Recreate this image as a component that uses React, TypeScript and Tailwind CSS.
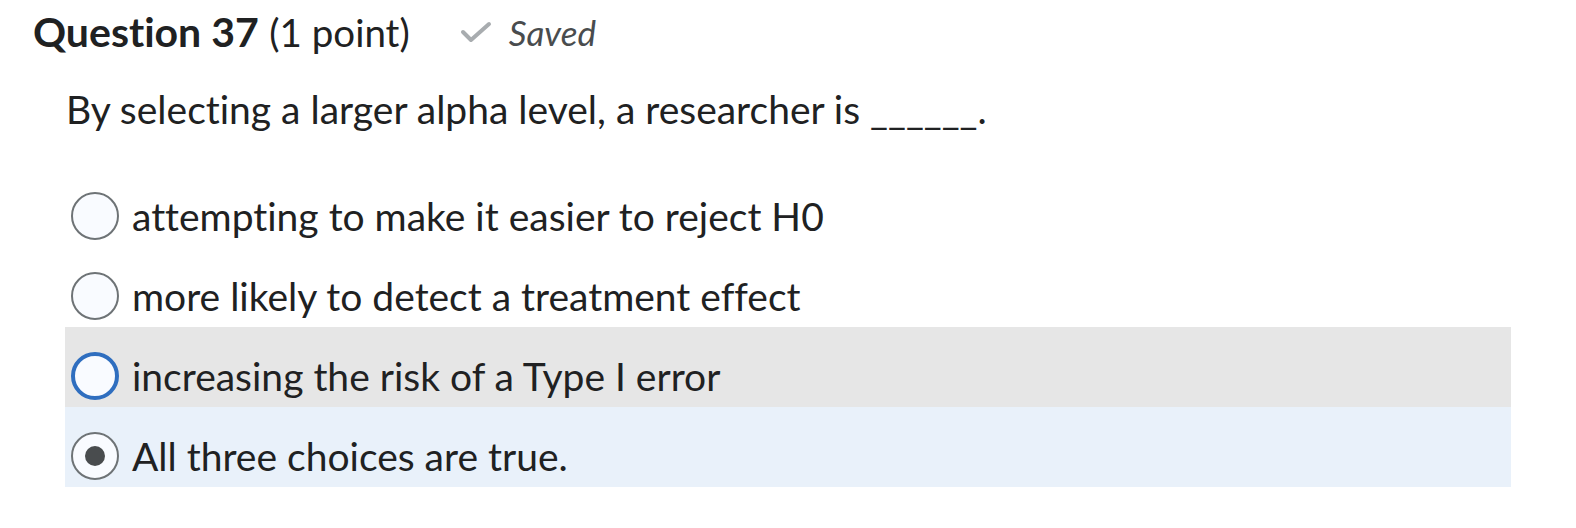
const choices = [
  { label: 'attempting to make it easier to reject H0', state: 'idle' },
  { label: 'more likely to detect a treatment effect', state: 'idle' },
  { label: 'increasing the risk of a Type I error', state: 'focus' },
  { label: 'All three choices are true.', state: 'checked' },
] as const

function Radio({ state }: { state: 'idle' | 'focus' | 'checked' }) {
  if (state === 'focus') {
    return <div className="w-12 h-12 shrink-0 rounded-full border-4 border-[#2f6ebf] bg-[#f9fbff]" />
  }
  return (
    <div className="w-12 h-12 shrink-0 rounded-full border-2 border-[#6e7376] bg-[#f9fbff] flex items-center justify-center">
      {state === 'checked' && <div className="w-5 h-5 rounded-full bg-[#494c4e]" />}
    </div>
  )
}

export default function App() {
  return (
    <div className="w-[1576px] h-[528px] bg-white text-[#202122] font-['Lato',sans-serif] [font-variant-ligatures:none] overflow-hidden">
      <div className="pl-[33px] pt-[8px] flex items-center h-[56px]">
        <h2 className="text-[41px] leading-[48px]">
          <span className="font-bold">Question 37</span> <span className="text-[38.5px]">(1 point)</span>
        </h2>
        <div className="ml-[50px] flex items-center gap-[17px]">
          <svg width="32" height="22" viewBox="0 0 32 22" fill="none">
            <polyline points="3,11 11,19 29,3" stroke="#a8acaf" strokeWidth="4" strokeLinecap="round" strokeLinejoin="round" />
          </svg>
          <span className="italic text-[35px] leading-[40px] text-[#494c4e]">Saved</span>
        </div>
      </div>

      <p className="ml-[66px] mt-[30px] text-[39px] leading-[46px]">
        By selecting a larger alpha level, a researcher is ______.
      </p>

      <div className="ml-[65px] mt-[35px] w-[1446px]">
        {choices.map((c) => (
          <div
            key={c.label}
            className={`h-[80px] pt-[25px] pl-[6px] flex items-start gap-[13px] ${
              c.state === 'focus' ? 'bg-[#e6e6e6]' : c.state === 'checked' ? 'bg-[#e9f1fa]' : ''
            }`}
          >
            <Radio state={c.state} />
            <span className="text-[39px] leading-[48px]">{c.label}</span>
          </div>
        ))}
      </div>
    </div>
  )
}
